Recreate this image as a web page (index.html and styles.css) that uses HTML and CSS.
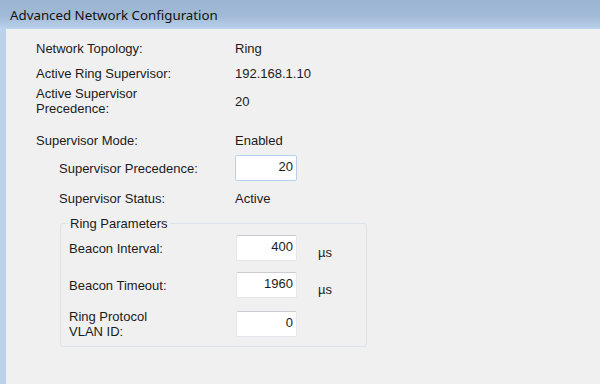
FILE: index.html
```html
<!DOCTYPE html>
<html lang="en">
<head>
  <meta charset="UTF-8">
  <title>Advanced Network Configuration</title>
  <link rel="stylesheet" href="styles.css">
</head>
<body>
  <div class="window">
    <div class="titlebar">Advanced Network Configuration</div>
    <div class="frame">
      <div class="strip"></div>
      <div class="panel">
        <div class="row"><span class="label">Network Topology:</span><span class="value">Ring</span></div>
        <div class="row"><span class="label">Active Ring Supervisor:</span><span class="value">192.168.1.10</span></div>
        <div class="row tall"><span class="label">Active Supervisor<br>Precedence:</span><span class="value">20</span></div>

        <div class="row spaced"><span class="label">Supervisor Mode:</span><span class="value">Enabled</span></div>
        <div class="row field"><span class="label indent">Supervisor Precedence:</span><input class="num focus" type="text" value="20"></div>
        <div class="row"><span class="label indent">Supervisor Status:</span><span class="value">Active</span></div>

        <fieldset class="group">
          <legend>Ring Parameters</legend>
          <div class="grow"><span class="glabel">Beacon Interval:</span><input class="num" type="text" value="400"><span class="unit">µs</span></div>
          <div class="grow"><span class="glabel">Beacon Timeout:</span><input class="num" type="text" value="1960"><span class="unit">µs</span></div>
          <div class="grow"><span class="glabel">Ring Protocol<br>VLAN ID:</span><input class="num" type="text" value="0"></div>
        </fieldset>
      </div>
    </div>
  </div>
</body>
</html>
```

FILE: styles.css
```css
html, body {
  margin: 0;
  padding: 0;
  height: 100%;
}
body {
  font-family: "Liberation Sans", Arial, sans-serif;
  font-size: 13px;
  color: #1b1b1b;
  background-color: #f0f0f0;
}
.window {
  display: flex;
  flex-direction: column;
  height: 384px;
}
.titlebar {
  height: 29px;
  box-sizing: border-box;
  padding: 6px 0 0 10px;
  font-family: "Noto Sans", "Open Sans", sans-serif;
  font-size: 13.3px;
  color: #111;
  background: linear-gradient(to bottom, #9ab4d2 0%, #a1bad6 55%, #b8d0ea 96%, #c2d8ef 100%);
}
.frame {
  flex: 1;
  display: flex;
}
.strip {
  width: 6px;
  background-color: #bad2ec;
}
.panel {
  flex: 1;
  padding: 7px 0 0 30px;
  background-color: #f0f0f0;
}
.row {
  display: grid;
  grid-template-columns: 199px auto;
  align-items: center;
  height: 24px;
  margin-bottom: 1px;
}
.row.tall {
  height: 30px;
  line-height: 15px;
}
.row.spaced {
  margin-top: 12px;
  margin-bottom: 3px;
}
.row.field {
  height: 26px;
  margin-bottom: 5px;
  grid-template-columns: 199px 62px;
}
.label.indent {
  padding-left: 23px;
}
.num {
  box-sizing: border-box;
  width: 62px;
  height: 26px;
  margin: 0;
  padding: 0 3px 4px 0;
  font-family: "Liberation Sans", Arial, sans-serif;
  font-size: 13px;
  color: #1b1b1b;
  text-align: right;
  background-color: #fff;
  border: 1px solid #e3e6ea;
  border-top-color: #c9ccd1;
  border-radius: 2px;
  outline: none;
}
.num.focus {
  border-color: #b7d1ec;
}
.group {
  width: 307px;
  box-sizing: border-box;
  margin: 6px 0 0 24px;
  padding: 4px 0 11px 8px;
  border: 1px solid #dde3e9;
  border-radius: 3px;
}
.group legend {
  padding: 0 2px;
  margin-left: -1px;
  line-height: 15px;
}
.grow {
  display: grid;
  grid-template-columns: 167px 61px auto;
  align-items: center;
  height: 26px;
  line-height: 15px;
  margin-bottom: 11px;
}
.grow:last-child {
  margin-bottom: 0;
}
.grow .num {
  width: 61px;
}
.unit {
  margin: 8px 0 0 21px;
}
```
